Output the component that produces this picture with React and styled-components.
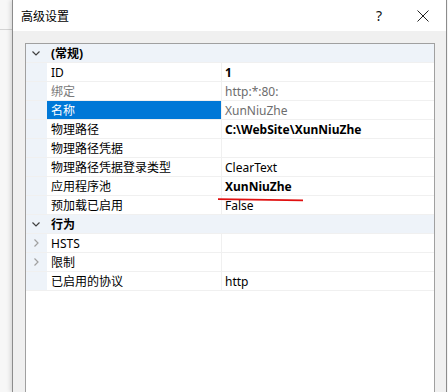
import React from 'react'
import styled, { createGlobalStyle } from 'styled-components'

const Global = createGlobalStyle`
  html, body {
    margin: 0;
    padding: 0;
    background: #f7f7f7;
    overflow: hidden;
  }
  body {
    font-family: "Noto Sans", "Noto Sans CJK SC", sans-serif;
    font-size: 12px;
    color: #000;
  }
`

const Desktop = styled.div`
  display: flex;
  width: 448px;
  height: 392px;
`

const Backdrop = styled.div`
  width: 12px;
  flex: none;
  background: #f7f7f7;
  padding-top: 29px;
  box-sizing: border-box;
  &::before {
    content: '';
    display: block;
    height: 1px;
    background: #d4d4d4;
  }
`

const Dialog = styled.div`
  width: 433px;
  flex: none;
  display: flex;
  flex-direction: column;
  border-left: 1px solid #8c8c8c;
  border-right: 1px solid #8c8c8c;
  background: #f0f0f0;
  box-shadow: -2px 0 4px rgba(0, 0, 0, 0.12);
`

const TitleBar = styled.div`
  height: 31px;
  flex: none;
  display: flex;
  align-items: center;
  background: #fff;
  padding-left: 8px;
`

const Title = styled.span`
  flex: 1;
  font-size: 12px;
`

const TitleButton = styled.div`
  width: ${p => p.$w}px;
  height: 30px;
  display: flex;
  align-items: center;
  justify-content: center;
  font-size: 14px;
  color: #111;
`

const Body = styled.div`
  flex: 1;
  padding: 12px 11px 0 12px;
  display: flex;
`

const Grid = styled.div`
  position: relative;
  flex: 1;
  background: #fff;
  border: 1px solid #a0a0a0;
  border-bottom: none;
`

const Row = styled.div`
  display: grid;
  grid-template-columns: 21px 174px 1px 1fr;
  height: 19px;
  box-sizing: border-box;
  border-bottom: 1px solid #f0f0f0;
  background: ${p => (p.$category ? '#eef3f9' : '#fff')};
`

const Gutter = styled.div`
  background: #eef3f9;
  display: flex;
  align-items: center;
  justify-content: center;
  padding-right: 2px;
`

const Name = styled.div`
  display: flex;
  align-items: center;
  padding-left: 4px;
  background: ${p => (p.$selected ? '#0078d7' : 'transparent')};
  color: ${p => (p.$selected ? '#fff' : p.$muted ? '#7a7a7a' : '#000')};
  font-weight: ${p => (p.$bold ? 700 : 400)};
  white-space: nowrap;
  grid-column: ${p => (p.$span ? '2 / 5' : 'auto')};
`

const Sep = styled.div`
  background: #f0f0f0;
`

const Value = styled.div`
  display: flex;
  align-items: center;
  padding-left: 3px;
  white-space: nowrap;
  color: ${p => (p.$muted ? '#6d6d6d' : '#000')};
  font-weight: ${p => (p.$bold ? 700 : 400)};
`

const Mark = styled.svg`
  position: absolute;
  left: 191px;
  top: 153px;
`

const Chevron = ({ open }) =>
  open ? (
    <svg width="10" height="10" viewBox="0 0 10 10">
      <polyline points="1.5,3.5 5,7 8.5,3.5" fill="none" stroke="#404040" strokeWidth="1.2" />
    </svg>
  ) : (
    <svg width="10" height="10" viewBox="0 0 10 10">
      <polyline points="3.5,1.5 7,5 3.5,8.5" fill="none" stroke="#a0a0a0" strokeWidth="1.2" />
    </svg>
  )

const rows = [
  { cat: true, name: '(常规)', open: true },
  { name: 'ID', value: '1', bold: true },
  { name: '绑定', value: 'http:*:80:', muted: true },
  { name: '名称', value: 'XunNiuZhe', muted: true, selected: true },
  { name: '物理路径', value: 'C:\\WebSite\\XunNiuZhe', bold: true },
  { name: '物理路径凭据', value: '' },
  { name: '物理路径凭据登录类型', value: 'ClearText' },
  { name: '应用程序池', value: 'XunNiuZhe', bold: true },
  { name: '预加载已启用', value: 'False' },
  { cat: true, name: '行为', open: true },
  { name: 'HSTS', value: '', closed: true },
  { name: '限制', value: '', closed: true },
  { name: '已启用的协议', value: 'http' },
]

export default function App() {
  return (
    <Desktop>
      <Global />
      <Backdrop />
      <Dialog>
        <TitleBar>
          <Title>高级设置</Title>
          <TitleButton $w={42}>?</TitleButton>
          <TitleButton $w={46}>
            <svg width="12" height="12" viewBox="0 0 12 12">
              <path d="M0.5 0.5 L11.5 11.5 M11.5 0.5 L0.5 11.5" stroke="#222" strokeWidth="1" />
            </svg>
          </TitleButton>
        </TitleBar>
        <Body>
          <Grid>
            {rows.map((r, i) =>
              r.cat ? (
                <Row key={i} $category>
                  <Gutter>
                    <Chevron open />
                  </Gutter>
                  <Name $bold $span>
                    {r.name}
                  </Name>
                </Row>
              ) : (
                <Row key={i}>
                  <Gutter>{r.closed && <Chevron />}</Gutter>
                  <Name $selected={r.selected} $muted={r.muted}>
                    {r.name}
                  </Name>
                  <Sep />
                  <Value $bold={r.bold} $muted={r.muted}>
                    {r.value}
                  </Value>
                </Row>
              )
            )}
            <Mark width="90" height="6" viewBox="0 0 90 6">
              <path d="M1 2.2 Q 40 2.6 86 3.4" fill="none" stroke="#e01010" strokeWidth="1.8" />
            </Mark>
          </Grid>
        </Body>
      </Dialog>
    </Desktop>
  )
}
